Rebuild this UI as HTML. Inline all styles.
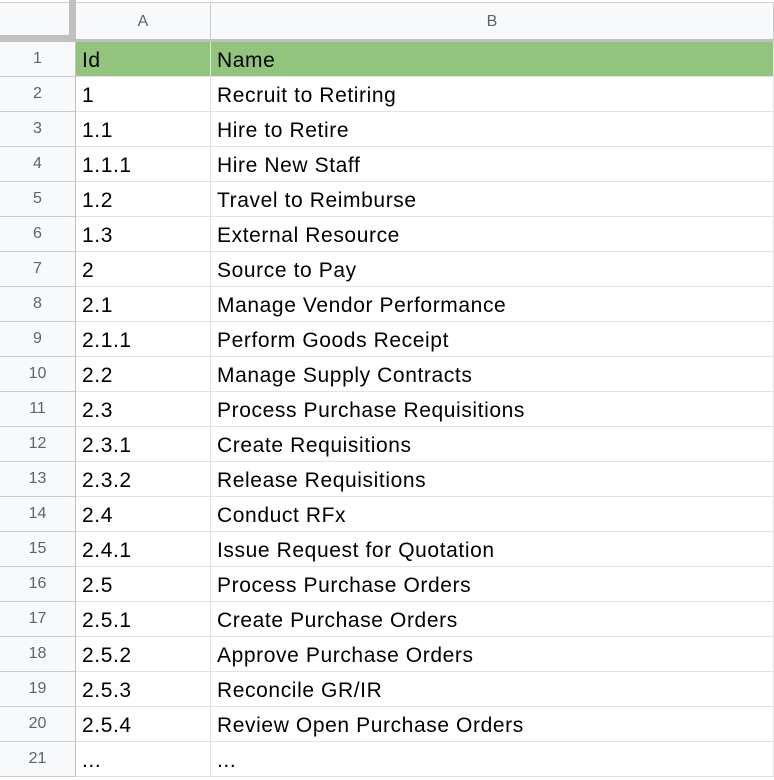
<!DOCTYPE html>
<html><head><style>
body{margin:0;background:#fff;width:774px;height:780px;overflow:hidden;font-family:"Liberation Sans",Arial,sans-serif;position:relative}
.a{position:absolute;box-sizing:border-box}
.rn{position:absolute;left:0;width:76px;height:35px;background:#f8f9fa;border-bottom:1px solid #c9cbcd;border-right:1px solid #c0c0c0;color:#5f6368;font-size:16px;text-align:center;line-height:34px;box-sizing:border-box}
.c{position:absolute;height:35px;border-bottom:1px solid #e2e3e3;border-right:1px solid #e2e3e3;font-size:21px;letter-spacing:0.6px;line-height:37px;padding-left:6px;box-sizing:border-box;color:#000;white-space:nowrap}
</style></head><body>
<div class="a" style="left:0;top:0;width:774px;height:3px;background:#fff;border-bottom:1px solid #d0d0d0"></div>
<div class="a" style="left:0;top:3px;width:69px;height:32px;background:#f8f9fa"></div>
<div class="a" style="left:69px;top:0;width:7px;height:42px;background:#c0c0c0"></div>
<div class="a" style="left:0;top:35px;width:76px;height:7px;background:#c0c0c0"></div>
<div class="a" style="left:76px;top:3px;width:135px;height:39px;background:#f8f9fa;border-right:1px solid #c9cbcd;border-bottom:3px solid #c0c0c0;text-align:center;line-height:38px;font-size:16px;color:#5f6368">A</div>
<div class="a" style="left:211px;top:3px;width:563px;height:39px;background:#f8f9fa;border-right:1px solid #c9cbcd;border-bottom:3px solid #c0c0c0;text-align:center;line-height:38px;font-size:16px;color:#5f6368">B</div>
<div id="g"></div>
<script>
var d=[["Id","Name"],["1","Recruit to Retiring"],["1.1","Hire to Retire"],["1.1.1","Hire New Staff"],["1.2","Travel to Reimburse"],["1.3","External Resource"],["2","Source to Pay"],["2.1","Manage Vendor Performance"],["2.1.1","Perform Goods Receipt"],["2.2","Manage Supply Contracts"],["2.3","Process Purchase Requisitions"],["2.3.1","Create Requisitions"],["2.3.2","Release Requisitions"],["2.4","Conduct RFx"],["2.4.1","Issue Request for Quotation"],["2.5","Process Purchase Orders"],["2.5.1","Create Purchase Orders"],["2.5.2","Approve Purchase Orders"],["2.5.3","Reconcile GR/IR"],["2.5.4","Review Open Purchase Orders"],["...","..."]];
var h="";
for(var i=0;i<d.length;i++){var t=42+i*35;var bg=i==0?"background:#93c47d;":"";
h+='<div class="rn" style="top:'+t+'px">'+(i+1)+'</div>';
h+='<div class="c" style="top:'+t+'px;left:76px;width:135px;'+bg+'">'+d[i][0]+'</div>';
h+='<div class="c" style="top:'+t+'px;left:211px;width:563px;'+bg+'">'+d[i][1]+'</div>';}
document.getElementById("g").innerHTML=h;
</script>
</body></html>
